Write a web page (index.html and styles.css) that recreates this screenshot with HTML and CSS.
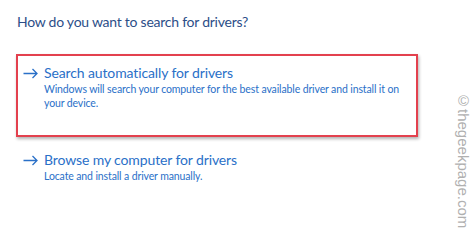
FILE: index.html
```html
<!DOCTYPE html>
<html>
<head>
<meta charset="utf-8">
<link rel="stylesheet" href="styles.css">
</head>
<body>
<div class="page">
  <h1 class="title">How do you want to search for drivers?</h1>
  <div class="box">
    <div class="option">
      <svg class="arrow" width="15" height="11" viewBox="0 0 15 11"><path d="M0.5 5.5H14M9.5 1L14 5.5L9.5 10" fill="none" stroke="#2a70c8" stroke-width="1.3"/></svg>
      <div class="text">
        <div class="head">Search automatically for drivers</div>
        <div class="desc">Windows will search your computer for the best available driver and install it on your device.</div>
      </div>
    </div>
  </div>
  <div class="option second">
    <svg class="arrow" width="15" height="11" viewBox="0 0 15 11"><path d="M0.5 5.5H14M9.5 1L14 5.5L9.5 10" fill="none" stroke="#2a70c8" stroke-width="1.3"/></svg>
    <div class="text">
      <div class="head">Browse my computer for drivers</div>
      <div class="desc">Locate and install a driver manually.</div>
    </div>
  </div>
</div>
<div class="watermark">©thegeekpage.com</div>
</body>
</html>
```
FILE: styles.css
```css
html, body { margin: 0; padding: 0; background: #fff; }
body { width: 474px; height: 252px; overflow: hidden; position: relative; font-family: "Lato", "Open Sans", sans-serif; }
.page { padding: 12px 0 0 16px; display: flex; flex-direction: column; }
.title { margin: 0 0 0 1px; font-size: 14px; letter-spacing: -0.25px; font-weight: 400; line-height: 20px; color: #2c4e88; }
.box { margin-top: 22px; width: 398px; height: 79px; border: 2px solid #e3414e; box-shadow: 1px 2px 3px rgba(0,0,0,0.3); box-sizing: content-box; }
.option { display: flex; align-items: flex-start; padding: 8px 0 0 5px; }
.second { padding: 14px 0 0 7px; }
.arrow { flex: none; margin-top: 4px; }
.text { margin-left: 6px; width: 365px; }
.head { font-size: 14px; letter-spacing: -0.12px; line-height: 18px; color: #2a70c8; }
.desc { font-size: 10.5px; letter-spacing: -0.12px; line-height: 14px; color: #2a70c8; margin-top: 0; }
.watermark { position: absolute; right: 2px; top: 92px; writing-mode: vertical-rl; font-family: "Liberation Sans", sans-serif; font-size: 15px; color: #b0b0b0; }
```
